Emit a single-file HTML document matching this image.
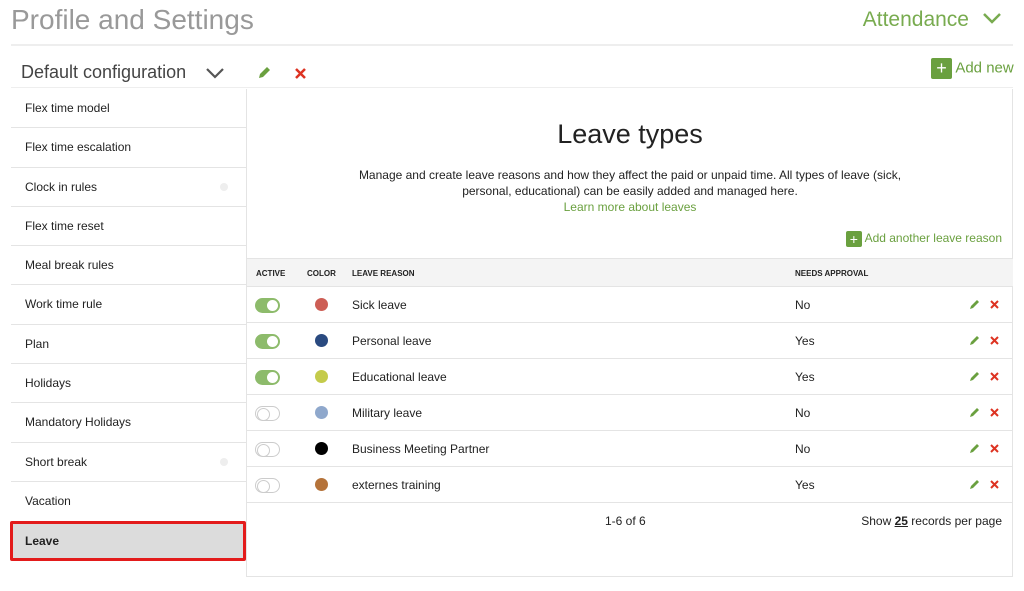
<!DOCTYPE html>
<html><head><style>
*{box-sizing:border-box;margin:0;padding:0}
body{width:1024px;height:591px;background:#fff;font-family:"Liberation Sans",sans-serif;color:#222;position:relative;overflow:hidden}
.a{position:absolute}
.h1{left:11px;top:4px;font-size:28px;color:#999;font-weight:300}
.att{right:55px;top:8px;font-size:21px;color:#78ab4f}
.hr{height:2px;background:#eee}
.side{left:11px;top:89px;width:235px}
.item{height:39.3px;border-bottom:1px solid #e4e4e4;font-size:12px;line-height:39px;padding-left:14px;position:relative}
.dot{position:absolute;right:18px;top:15px;width:8px;height:8px;border-radius:50%;background:#eee}
.main{left:246px;top:89px;width:767px;height:488px;border:1px solid #e4e4e4;border-top:none}
.row{position:absolute;left:0;width:766px;height:36px;border-bottom:1px solid #e4e4e4;font-size:12px}
.row span{position:absolute;top:11px}
.tg{position:absolute;left:8px;top:11px;width:25px;height:15px;border-radius:8px}
.tg.on{background:#8dbb6b}.tg.on:after{content:"";position:absolute;right:2px;top:2px;width:11px;height:11px;border-radius:50%;background:#fff}
.tg.off{background:#fff;border:1px solid #ccc}.tg.off:after{content:"";position:absolute;left:1px;top:1px;width:11px;height:11px;border-radius:50%;background:#fff;border:1px solid #ccc}
.c{position:absolute;left:68px;top:11px;width:13px;height:13px;border-radius:50%}
.pen{position:absolute;left:722px;top:12px}
.x{position:absolute;left:743px;top:13px}
.plus{display:inline-block;background:#6aa03f;color:#fff;text-align:center;border-radius:2px;vertical-align:middle}
</style></head><body>
<div class="a h1">Profile and Settings</div>
<div class="a att">Attendance</div>
<svg class="a" style="left:983px;top:12px" width="18" height="12"><path d="M1 2l8 8 8-8" stroke="#78ab4f" stroke-width="2.5" fill="none"/></svg>
<div class="a hr" style="left:11px;top:44px;width:1002px"></div>
<div class="a" style="left:21px;top:62px;font-size:18px;color:#444">Default configuration</div>
<svg class="a" style="left:206px;top:67px" width="18" height="12"><path d="M1 2l8 8 8-8" stroke="#555" stroke-width="2.2" fill="none"/></svg>
<svg class="a" style="left:258px;top:66px" width="13" height="13"><path d="M1 12l1-4 7-7 3 3-7 7z" fill="#6aa03f"/></svg>
<svg class="a" style="left:295px;top:68px" width="11" height="11"><path d="M1 1l9 9M10 1l-9 9" stroke="#d32" stroke-width="2.5"/></svg>
<div class="a" style="left:931px;top:58px;font-size:15px;color:#6aa03f"><span class="plus" style="width:21px;height:21px;line-height:21px;font-size:18px">+</span> Add new</div>
<div class="a hr" style="left:11px;top:87px;width:1002px;height:1px"></div>
<div class="a side">
<div class="item">Flex time model</div>
<div class="item">Flex time escalation</div>
<div class="item">Clock in rules<i class="dot"></i></div>
<div class="item">Flex time reset</div>
<div class="item">Meal break rules</div>
<div class="item">Work time rule</div>
<div class="item">Plan</div>
<div class="item">Holidays</div>
<div class="item">Mandatory Holidays</div>
<div class="item">Short break<i class="dot"></i></div>
<div class="item" style="border:none">Vacation</div>
</div>
<div class="a" style="left:10px;top:521px;width:236px;height:40px;background:#dcdcdc;border:3px solid #e31b1b;border-radius:2px;font-size:12px;font-weight:bold;line-height:34px;padding-left:12px">Leave</div>
<div class="a main">
<div class="a" style="left:0;width:766px;top:30px;text-align:center;font-size:27px;color:#222">Leave types</div>
<div class="a" style="left:100px;width:566px;top:78px;text-align:center;font-size:12px;line-height:16px">Manage and create leave reasons and how they affect the paid or unpaid time. All types of leave (sick, personal, educational) can be easily added and managed here.<br><span style="color:#6aa03f">Learn more about leaves</span></div>
<div class="a" style="right:10px;top:142px;font-size:12px;color:#6aa03f"><span class="plus" style="width:16px;height:16px;line-height:16px;font-size:14px">+</span> Add another leave reason</div>
<div class="row" style="top:169px;height:29px;background:#f4f4f4;border-top:1px solid #e4e4e4;font-size:8px;font-weight:bold"><span style="left:9px;top:10px">ACTIVE</span><span style="left:60px;top:10px">COLOR</span><span style="left:105px;top:10px">LEAVE REASON</span><span style="left:548px;top:10px">NEEDS APPROVAL</span></div>
<div class="row" style="top:198px"><i class="tg on"></i><i class="c" style="background:#cd5e55"></i><span style="left:105px">Sick leave</span><span style="left:548px">No</span><svg class="pen" width="11" height="11"><path d="M1 10l1-3 6-6 2 2-6 6z" fill="#6aa03f"/></svg><svg class="x" width="9" height="9"><path d="M1 1l7 7M8 1l-7 7" stroke="#d32" stroke-width="2"/></svg></div>
<div class="row" style="top:234px"><i class="tg on"></i><i class="c" style="background:#2a4a80"></i><span style="left:105px">Personal leave</span><span style="left:548px">Yes</span><svg class="pen" width="11" height="11"><path d="M1 10l1-3 6-6 2 2-6 6z" fill="#6aa03f"/></svg><svg class="x" width="9" height="9"><path d="M1 1l7 7M8 1l-7 7" stroke="#d32" stroke-width="2"/></svg></div>
<div class="row" style="top:270px"><i class="tg on"></i><i class="c" style="background:#c4cb4b"></i><span style="left:105px">Educational leave</span><span style="left:548px">Yes</span><svg class="pen" width="11" height="11"><path d="M1 10l1-3 6-6 2 2-6 6z" fill="#6aa03f"/></svg><svg class="x" width="9" height="9"><path d="M1 1l7 7M8 1l-7 7" stroke="#d32" stroke-width="2"/></svg></div>
<div class="row" style="top:306px"><i class="tg off"></i><i class="c" style="background:#8fa8cc"></i><span style="left:105px">Military leave</span><span style="left:548px">No</span><svg class="pen" width="11" height="11"><path d="M1 10l1-3 6-6 2 2-6 6z" fill="#6aa03f"/></svg><svg class="x" width="9" height="9"><path d="M1 1l7 7M8 1l-7 7" stroke="#d32" stroke-width="2"/></svg></div>
<div class="row" style="top:342px"><i class="tg off"></i><i class="c" style="background:#000"></i><span style="left:105px">Business Meeting Partner</span><span style="left:548px">No</span><svg class="pen" width="11" height="11"><path d="M1 10l1-3 6-6 2 2-6 6z" fill="#6aa03f"/></svg><svg class="x" width="9" height="9"><path d="M1 1l7 7M8 1l-7 7" stroke="#d32" stroke-width="2"/></svg></div>
<div class="row" style="top:378px"><i class="tg off"></i><i class="c" style="background:#b5733a"></i><span style="left:105px">externes training</span><span style="left:548px">Yes</span><svg class="pen" width="11" height="11"><path d="M1 10l1-3 6-6 2 2-6 6z" fill="#6aa03f"/></svg><svg class="x" width="9" height="9"><path d="M1 1l7 7M8 1l-7 7" stroke="#d32" stroke-width="2"/></svg></div>
<div class="a" style="left:358px;top:425px;font-size:12px">1-6 of 6</div>
<div class="a" style="right:10px;top:425px;font-size:12px">Show <b style="text-decoration:underline">25</b> records per page</div>
</div>
</body></html>
